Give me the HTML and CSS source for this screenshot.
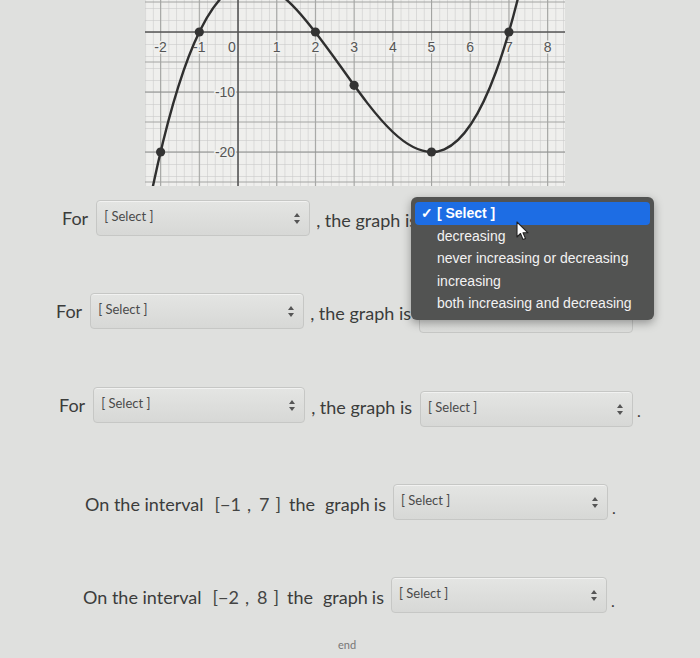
FILE: index.html
```html
<!DOCTYPE html>
<html>
<head>
<meta charset="utf-8">
<link rel="stylesheet" href="styles.css">
</head>
<body>
<div class="page">
  <div class="graph">
    <svg width="420" height="186" viewBox="0 0 420 186">
      <defs>
        <pattern id="minor" x="93" y="32" width="7.74" height="12" patternUnits="userSpaceOnUse">
          <line x1="0.3" y1="0" x2="0.3" y2="12" stroke="#c9cac8" stroke-width="0.7"/>
          <line x1="0" y1="0.3" x2="7.74" y2="0.3" stroke="#c9cac8" stroke-width="0.7"/>
        </pattern>
      </defs>
      <rect x="0" y="0" width="420" height="186" fill="#efefed"/>
      <rect x="0" y="0" width="420" height="186" fill="url(#minor)"/>
      <g stroke="#a3a4a2" stroke-width="1">
        <line x1="15.6" y1="0" x2="15.6" y2="186"/>
        <line x1="54.3" y1="0" x2="54.3" y2="186"/>
        <line x1="131.7" y1="0" x2="131.7" y2="186"/>
        <line x1="170.4" y1="0" x2="170.4" y2="186"/>
        <line x1="209.1" y1="0" x2="209.1" y2="186"/>
        <line x1="247.8" y1="0" x2="247.8" y2="186"/>
        <line x1="286.5" y1="0" x2="286.5" y2="186"/>
        <line x1="325.2" y1="0" x2="325.2" y2="186"/>
        <line x1="363.9" y1="0" x2="363.9" y2="186"/>
        <line x1="402.6" y1="0" x2="402.6" y2="186"/>
        <line x1="0" y1="2" x2="420" y2="2"/>
        <line x1="0" y1="62" x2="420" y2="62"/>
        <line x1="0" y1="122" x2="420" y2="122"/>
        <line x1="0" y1="182" x2="420" y2="182"/>
      </g>
      <g stroke="#8a8b89" stroke-width="1.2">
        <line x1="0" y1="92" x2="420" y2="92"/>
        <line x1="0" y1="152" x2="420" y2="152"/>
      </g>
      <g stroke="#555" stroke-width="1.6">
        <line x1="0" y1="32" x2="420" y2="32"/>
        <line x1="93" y1="0" x2="93" y2="186"/>
      </g>
      <g class="ax" font-size="14" text-anchor="middle">
        <text x="15.6" y="52">-2</text>
        <text x="54.3" y="52">-1</text>
        <text x="87" y="52">0</text>
        <text x="131.7" y="52">1</text>
        <text x="170.4" y="52">2</text>
        <text x="209.1" y="52">3</text>
        <text x="247.8" y="52">4</text>
        <text x="286.5" y="52">5</text>
        <text x="325.2" y="52">6</text>
        <text x="363.9" y="52">7</text>
        <text x="402.6" y="52">8</text>
        <text x="80" y="97">-10</text>
        <text x="80" y="157">-20</text>
      </g>
      <path d="M0.12,225.01 C134.28,-476.18 268.44,649.33 402.6,-148" fill="none" stroke="#2f2f2f" stroke-width="2.4"/>
      <g fill="#333">
        <circle cx="15.6" cy="152" r="4.6"/>
        <circle cx="54.3" cy="32" r="4.6"/>
        <circle cx="170.4" cy="32" r="4.6"/>
        <circle cx="209.1" cy="85.3" r="4.6"/>
        <circle cx="286.5" cy="152" r="4.6"/>
        <circle cx="363.9" cy="32" r="4.6"/>
      </g>
    </svg>
  </div>

  <div class="row r1">
    <span class="lbl">For</span>
    <div class="sel w214"><span class="st">[ Select ]</span><svg class="arr" width="6" height="11" viewBox="0 0 6 11"><path d="M3 0 L6 4 L0 4 Z M0 7 L6 7 L3 11 Z" fill="#555"/></svg></div>
    <span class="txt">, the graph is</span>
    <div class="sel w214 sel-hidden"></div>
  </div>

  <div class="row r2">
    <span class="lbl">For</span>
    <div class="sel w214"><span class="st">[ Select ]</span><svg class="arr" width="6" height="11" viewBox="0 0 6 11"><path d="M3 0 L6 4 L0 4 Z M0 7 L6 7 L3 11 Z" fill="#555"/></svg></div>
    <span class="txt">, the graph is</span>
    <div class="sel w214 sel-hidden sel-low"></div>
  </div>

  <div class="row r3">
    <span class="lbl">For</span>
    <div class="sel w212"><span class="st">[ Select ]</span><svg class="arr" width="6" height="11" viewBox="0 0 6 11"><path d="M3 0 L6 4 L0 4 Z M0 7 L6 7 L3 11 Z" fill="#555"/></svg></div>
    <span class="txt">, the graph is</span>
    <div class="sel w213 sel-low"><span class="st">[ Select ]</span><svg class="arr" width="6" height="11" viewBox="0 0 6 11"><path d="M3 0 L6 4 L0 4 Z M0 7 L6 7 L3 11 Z" fill="#555"/></svg></div>
    <span class="dot">.</span>
  </div>

  <div class="row r4">
    <span class="txt2">On the interval</span>
    <span class="m"><span class="br">[</span><span class="n1">−1</span><span class="cm">,</span><span class="n2">7</span><span class="br">]</span></span>
    <span class="txt2 w-the">the</span>
    <span class="txt2 w-graph">graph</span>
    <span class="txt2 w-is">is</span>
    <div class="sel w215"><span class="st">[ Select ]</span><svg class="arr" width="6" height="11" viewBox="0 0 6 11"><path d="M3 0 L6 4 L0 4 Z M0 7 L6 7 L3 11 Z" fill="#555"/></svg></div>
    <span class="dot">.</span>
  </div>

  <div class="row r5">
    <span class="txt2">On the interval</span>
    <span class="m"><span class="br">[</span><span class="n1">−2</span><span class="cm">,</span><span class="n2">8</span><span class="br">]</span></span>
    <span class="txt2 w-the">the</span>
    <span class="txt2 w-graph">graph</span>
    <span class="txt2 w-is">is</span>
    <div class="sel w216"><span class="st">[ Select ]</span><svg class="arr" width="6" height="11" viewBox="0 0 6 11"><path d="M3 0 L6 4 L0 4 Z M0 7 L6 7 L3 11 Z" fill="#555"/></svg></div>
    <span class="dot">.</span>
  </div>

  <div class="end">end</div>

  <div class="menu">
    <div class="opt active">✓ [ Select ]</div>
    <div class="opt">decreasing</div>
    <div class="opt">never increasing or decreasing</div>
    <div class="opt">increasing</div>
    <div class="opt">both increasing and decreasing</div>
  </div>

  <svg class="cursor" width="14" height="20" viewBox="0 0 14 20">
    <path d="M1 1 L1 16 L4.5 12.5 L7 18.5 L9.5 17.5 L7 11.8 L12 11.8 Z" fill="#fff" stroke="#222" stroke-width="1.1" stroke-linejoin="round"/>
  </svg>
</div>
</body>
</html>
```

FILE: styles.css
```css
html, body {
  margin: 0;
  padding: 0;
  background: #dfe0de;
}
.page {
  position: relative;
  width: 700px;
  height: 658px;
  overflow: hidden;
  font-family: Lato, "Open Sans", sans-serif;
  color: #3b3c3b;
}
.graph {
  margin-left: 145px;
  height: 186px;
}
.graph svg {
  display: block;
}
.ax text {
  font-family: "Liberation Sans", Arial, sans-serif;
  fill: #555;
  stroke: #efefed;
  stroke-width: 3px;
  paint-order: stroke;
}
.row {
  display: flex;
  align-items: center;
  height: 36px;
}
.r1 { margin-top: 14px; padding-left: 62px; }
.r2 { margin-top: 57px; padding-left: 56px; }
.r3 { margin-top: 58px; padding-left: 59px; }
.r4 { margin-top: 61px; padding-left: 85px; }
.r5 { margin-top: 57px; padding-left: 83px; }
.lbl {
  font-size: 18px;
  margin-right: 8px;
}
.txt {
  font-size: 18px;
  margin: 4px 8px 0 6px;
  white-space: nowrap;
}
.txt2 {
  font-size: 18px;
  margin-top: 4px;
  white-space: nowrap;
}
.m {
  display: flex;
  align-items: center;
  margin: 4px 0 0 11px;
  font-size: 18px;
  color: #444544;
}
.n1 { margin-left: 0; }
.cm { margin-left: 6px; }
.n2 { margin-left: 8px; }
.n2 + .br { margin-left: 6px; }
.w-the { margin-left: 8px; }
.w-graph { margin-left: 10px; }
.w-is { margin-left: 4px; margin-right: 7px; }
.dot {
  font-size: 16px;
  margin-left: 4px;
  margin-top: 10px;
}
.sel {
  position: relative;
  box-sizing: border-box;
  height: 36px;
  flex: none;
  border: 1px solid #c6c7c5;
  border-radius: 4px;
  background: linear-gradient(#e4e5e3, #d7d8d6);
  box-shadow: inset 0 1px 0 rgba(255,255,255,0.5);
}
.sel-hidden {
  background: linear-gradient(#e8e9e7, #dcdddb);
}
.sel-low { margin-top: 8px; }
.w212 { width: 212px; }
.w213 { width: 213px; }
.w214 { width: 214px; }
.w215 { width: 215px; }
.w216 { width: 216px; }
.st {
  position: absolute;
  left: 7px;
  top: 7px;
  font-size: 13px;
  color: #4a4a4a;
}
.arr {
  position: absolute;
  right: 9px;
  top: 12px;
}
.end {
  margin-top: 25px;
  padding-left: 338px;
  font-size: 11px;
  color: #777;
}
.menu {
  position: absolute;
  left: 411px;
  top: 197px;
  width: 243px;
  height: 123px;
  box-sizing: border-box;
  padding: 5px 4px;
  background: #525352;
  border-radius: 6px;
  box-shadow: 0 3px 10px rgba(0,0,0,0.35);
  font-family: "Liberation Sans", Arial, sans-serif;
  font-size: 14px;
  color: #f2f2f2;
}
.opt {
  height: 22.5px;
  line-height: 22.5px;
  padding-left: 22px;
  white-space: nowrap;
}
.opt.active {
  padding-left: 6px;
  background: #1d6de4;
  border-radius: 4px;
  color: #fff;
  font-weight: bold;
}
.cursor {
  position: absolute;
  left: 516px;
  top: 221px;
}
```
